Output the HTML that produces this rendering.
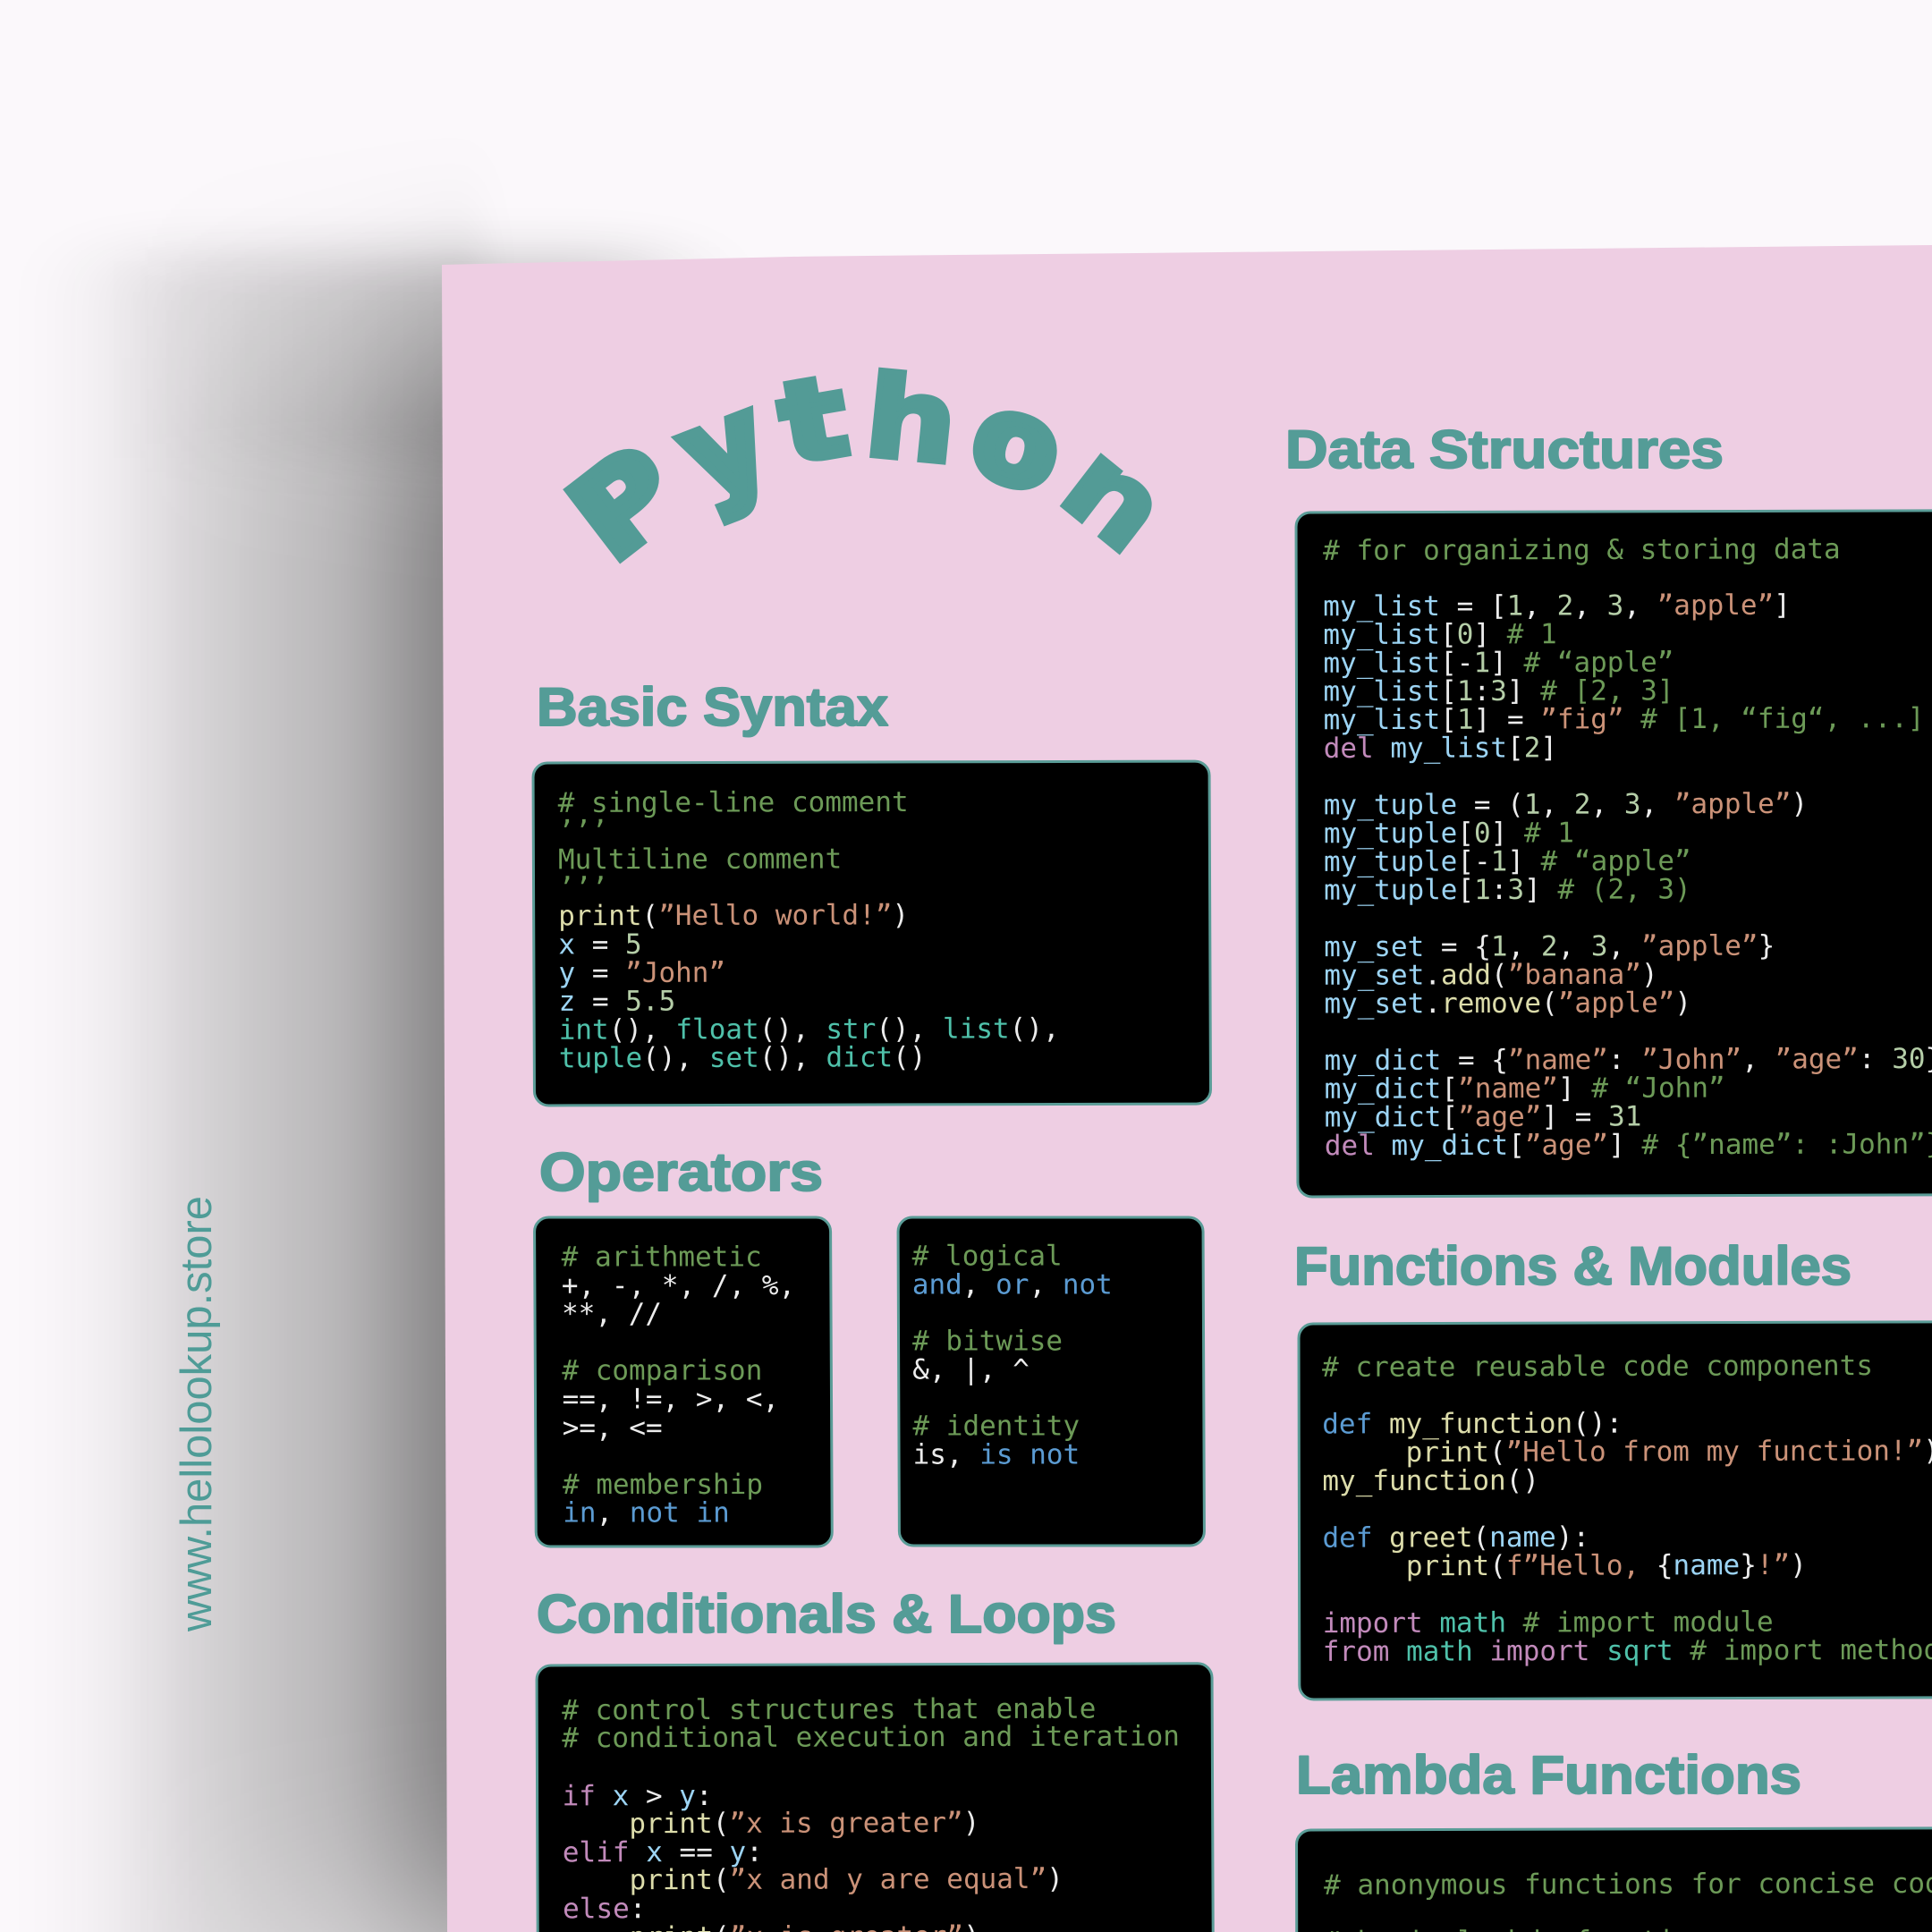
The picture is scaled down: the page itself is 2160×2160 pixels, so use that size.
<!DOCTYPE html>
<html lang="en"><head><meta charset="utf-8"><title>Python cheat sheet poster</title>
<style>
html,body{margin:0;padding:0;background:#fbf8fb;width:2160px;height:2160px;overflow:hidden}
svg{display:block}
text{white-space:pre}
.code text{font-family:"DejaVu Sans Mono","Liberation Mono",monospace;fill:#ececec;font-size:31px}
.h{font-family:"Liberation Sans",sans-serif;font-weight:700;font-size:60px;fill:#549c97;stroke:#549c97;stroke-width:2px;stroke-linejoin:round}
.py{font-family:"DejaVu Sans",sans-serif;font-weight:700;font-size:100px;fill:#539b96;stroke:#539b96;stroke-width:5px;stroke-linejoin:miter}
.box{fill:#000;stroke:#5a9c97;stroke-width:3px}
.c{fill:#6c9a57}.s{fill:#cb9278}.f{fill:#dcdcaa}.v{fill:#9cd4f4}.k{fill:#c28abb}.b{fill:#5b9bd2}.t{fill:#4fc1aa}.n{fill:#b5cea8}
</style></head><body>
<svg width="2160" height="2160" viewBox="0 0 2160 2160" xmlns="http://www.w3.org/2000/svg">
<defs>
<filter id="sa" x="-40%" y="-20%" width="180%" height="140%"><feGaussianBlur stdDeviation="62 28"/></filter>
<filter id="sb" x="-50%" y="-40%" width="200%" height="180%"><feGaussianBlur stdDeviation="20 110"/></filter>
<filter id="sc" x="-40%" y="-60%" width="180%" height="220%"><feGaussianBlur stdDeviation="50 24"/></filter>
<linearGradient id="gb" x1="0" x2="1" y1="0" y2="0"><stop offset="0" stop-color="#000" stop-opacity="0"/><stop offset=".6" stop-color="#000" stop-opacity=".19"/><stop offset="1" stop-color="#000" stop-opacity=".46"/></linearGradient>
<linearGradient id="gc" x1="0" x2="1" y1="0" y2="0"><stop offset="0" stop-color="#141418" stop-opacity="0"/><stop offset=".6" stop-color="#141418" stop-opacity=".1"/><stop offset="1" stop-color="#141418" stop-opacity=".1"/></linearGradient>
</defs>
<rect width="2160" height="2160" fill="#fbf8fb"/>
<rect x="125" y="280" width="620" height="2120" fill="#141418" opacity=".1" filter="url(#sa)"/>
<rect x="150" y="400" width="390" height="1770" fill="url(#gb)" filter="url(#sb)"/>
<rect x="160" y="292" width="570" height="220" fill="url(#gc)" filter="url(#sc)"/>
<polygon points="494,296 900,286.7 2160,274 2160,2160 500,2160" fill="#eecee3"/>

<text transform="translate(236 1824) rotate(-90)" textLength="487" lengthAdjust="spacingAndGlyphs" font-family="'Liberation Sans',sans-serif" font-size="49" fill="#4f9c97">www.hellolookup.store</text>

<text class="py" style="stroke-width:8px" transform="matrix(1.15,-.89,.79,1.03,684,631)">P</text>
<text class="py" style="stroke-width:8px" transform="matrix(1.246,-.48,.55,1.25,788,559.4)">y</text>
<text class="py" style="stroke-width:8px" transform="matrix(1.45,-.25,.21,1.2,882,517)">t</text>
<text class="py" transform="matrix(1.42,.13,-.127,1.25,964,508)">h</text>
<text class="py" style="stroke-width:9px" transform="matrix(1.3,.4,-.35,1.25,1080.5,524)">o</text>
<text class="py" transform="matrix(1.12,.91,-.77,1,1180,558)">n</text>

<text class="h" x="600" y="811" textLength="393" lengthAdjust="spacingAndGlyphs">Basic Syntax</text>
<text class="h" x="603" y="1331" textLength="317" lengthAdjust="spacingAndGlyphs">Operators</text>
<text class="h" x="600" y="1825" textLength="648" lengthAdjust="spacingAndGlyphs">Conditionals &amp; Loops</text>
<text class="h" x="1437" y="523" textLength="490" lengthAdjust="spacingAndGlyphs">Data Structures</text>
<text class="h" x="1447" y="1436" textLength="623" lengthAdjust="spacingAndGlyphs">Functions &amp; Modules</text>
<text class="h" x="1449" y="2005" textLength="565" lengthAdjust="spacingAndGlyphs">Lambda Functions</text>

<!-- Basic syntax -->
<g class="code" transform="translate(596 853) matrix(1 -.0026 .004 1 0 0)">
<rect class="box" width="756" height="383" rx="16"/>
<text x="27.5" y="55" style="fill:#6c9a57"># single-line comment</text>
<text x="27.5" y="86.6" style="fill:#6c9a57">’’’</text>
<text x="27.5" y="118.4" style="fill:#6c9a57">Multiline comment</text>
<text x="27.5" y="150" style="fill:#6c9a57">’’’</text>
<text x="27.5" y="181.4"><tspan class="f">print</tspan>(<tspan class="s">”Hello world!”</tspan>)</text>
<text x="27.5" y="213.4"><tspan class="v">x</tspan> = <tspan class="n">5</tspan></text>
<text x="27.5" y="245.2"><tspan class="v">y</tspan> = <tspan class="s">”John”</tspan></text>
<text x="27.5" y="277"><tspan class="v">z</tspan> = <tspan class="n">5.5</tspan></text>
<text x="27.5" y="308.8"><tspan class="t">int</tspan>(), <tspan class="t">float</tspan>(), <tspan class="t">str</tspan>(), <tspan class="t">list</tspan>(),</text>
<text x="27.5" y="340.4"><tspan class="t">tuple</tspan>(), <tspan class="t">set</tspan>(), <tspan class="t">dict</tspan>()</text>
</g>

<!-- Operators A -->
<g class="code" transform="translate(597.5 1361) matrix(1 0 .005 1 0 0)">
<rect class="box" width="331" height="368" rx="16"/>
<text x="30" y="54.5" style="fill:#6c9a57"># arithmetic</text>
<text x="30" y="86.3">+, -, *, /, %,</text>
<text x="30" y="118.1">**, //</text>
<text x="30" y="181.7" style="fill:#6c9a57"># comparison</text>
<text x="30" y="213.5">==, !=, &gt;, &lt;,</text>
<text x="30" y="245.3">&gt;=, &lt;=</text>
<text x="30" y="308.9" style="fill:#6c9a57"># membership</text>
<text x="30" y="340.7"><tspan class="b">in</tspan>, <tspan class="b">not in</tspan></text>
</g>

<!-- Operators B -->
<g class="code" transform="translate(1004 1361) matrix(1 0 .004 1 0 0)">
<rect class="box" width="341" height="367" rx="16"/>
<text x="15.5" y="53.5" style="fill:#6c9a57"># logical</text>
<text x="15.5" y="85.5"><tspan class="b">and</tspan>, <tspan class="b">or</tspan>, <tspan class="b">not</tspan></text>
<text x="15.5" y="148.5" style="fill:#6c9a57"># bitwise</text>
<text x="15.5" y="180.5">&amp;, |, ^</text>
<text x="15.5" y="243.5" style="fill:#6c9a57"># identity</text>
<text x="15.5" y="275.5">is, <tspan class="b">is not</tspan></text>
</g>

<!-- Conditionals -->
<g class="code" transform="translate(600 1862) matrix(1 -.003 .004 1 0 0)">
<rect class="box" width="755" height="420" rx="16"/>
<text x="28" y="60.5" style="fill:#6c9a57"># control structures that enable</text>
<text x="28" y="91.5" style="fill:#6c9a57"># conditional execution and iteration</text>
<text x="28" y="156.5"><tspan class="k">if</tspan> <tspan class="v">x</tspan> &gt; <tspan class="v">y</tspan>:</text>
<text x="28" y="187.5">    <tspan class="f">print</tspan>(<tspan class="s">”x is greater”</tspan>)</text>
<text x="28" y="219.5"><tspan class="k">elif</tspan> <tspan class="v">x</tspan> == <tspan class="v">y</tspan>:</text>
<text x="28" y="250.5">    <tspan class="f">print</tspan>(<tspan class="s">”x and y are equal”</tspan>)</text>
<text x="28" y="282.5"><tspan class="k">else</tspan>:</text>
<text x="28" y="314.5">    <tspan class="f">print</tspan>(<tspan class="s">”x is greater”</tspan>)</text>
</g>

<!-- Data structures -->
<g class="code" transform="translate(1449 573) matrix(1 -.003 .0026 1 0 0)">
<rect class="box" width="800" height="765" rx="16"/>
<text x="30" y="53" style="fill:#6c9a57"># for organizing &amp; storing data</text>
<text x="30" y="115.4"><tspan class="v">my_list</tspan> = [<tspan class="n">1</tspan>, <tspan class="n">2</tspan>, <tspan class="n">3</tspan>, <tspan class="s">”apple”</tspan>]</text>
<text x="30" y="147.1"><tspan class="v">my_list</tspan>[<tspan class="n">0</tspan>] <tspan class="c"># 1</tspan></text>
<text x="30" y="178.9"><tspan class="v">my_list</tspan>[-<tspan class="n">1</tspan>] <tspan class="c"># “apple”</tspan></text>
<text x="30" y="210.6"><tspan class="v">my_list</tspan>[<tspan class="n">1</tspan>:<tspan class="n">3</tspan>] <tspan class="c"># [2, 3]</tspan></text>
<text x="30" y="242.3"><tspan class="v">my_list</tspan>[<tspan class="n">1</tspan>] = <tspan class="s">”fig”</tspan> <tspan class="c"># [1, “fig“, ...]</tspan></text>
<text x="30" y="274.1"><tspan class="k">del</tspan> <tspan class="v">my_list</tspan>[<tspan class="n">2</tspan>]</text>
<text x="30" y="337.5"><tspan class="v">my_tuple</tspan> = (<tspan class="n">1</tspan>, <tspan class="n">2</tspan>, <tspan class="n">3</tspan>, <tspan class="s">”apple”</tspan>)</text>
<text x="30" y="369.3"><tspan class="v">my_tuple</tspan>[<tspan class="n">0</tspan>] <tspan class="c"># 1</tspan></text>
<text x="30" y="401"><tspan class="v">my_tuple</tspan>[-<tspan class="n">1</tspan>] <tspan class="c"># “apple”</tspan></text>
<text x="30" y="432.7"><tspan class="v">my_tuple</tspan>[<tspan class="n">1</tspan>:<tspan class="n">3</tspan>] <tspan class="c"># (2, 3)</tspan></text>
<text x="30" y="496.2"><tspan class="v">my_set</tspan> = {<tspan class="n">1</tspan>, <tspan class="n">2</tspan>, <tspan class="n">3</tspan>, <tspan class="s">”apple”</tspan>}</text>
<text x="30" y="527.9"><tspan class="v">my_set</tspan>.<tspan class="f">add</tspan>(<tspan class="s">”banana”</tspan>)</text>
<text x="30" y="559.6"><tspan class="v">my_set</tspan>.<tspan class="f">remove</tspan>(<tspan class="s">”apple”</tspan>)</text>
<text x="30" y="623.1"><tspan class="v">my_dict</tspan> = {<tspan class="s">”name”</tspan>: <tspan class="s">”John”</tspan>, <tspan class="s">”age”</tspan>: <tspan class="n">30</tspan>}</text>
<text x="30" y="654.9"><tspan class="v">my_dict</tspan>[<tspan class="s">”name”</tspan>] <tspan class="c"># “John”</tspan></text>
<text x="30" y="686.6"><tspan class="v">my_dict</tspan>[<tspan class="s">”age”</tspan>] = <tspan class="n">31</tspan></text>
<text x="30" y="718.4"><tspan class="k">del</tspan> <tspan class="v">my_dict</tspan>[<tspan class="s">”age”</tspan>] <tspan class="c"># {”name”: :John”}</tspan></text>
</g>

<!-- Functions -->
<g class="code" transform="translate(1452 1480) matrix(1 -.003 .002 1 0 0)">
<rect class="box" width="800" height="420" rx="16"/>
<text x="26" y="59" style="fill:#6c9a57"># create reusable code components</text>
<text x="26" y="122.6"><tspan class="b">def</tspan> <tspan class="f">my_function</tspan>():</text>
<text x="26" y="154.4">     <tspan class="f">print</tspan>(<tspan class="s">”Hello from my function!”</tspan>)</text>
<text x="26" y="186.2"><tspan class="f">my_function</tspan>()</text>
<text x="26" y="249.8"><tspan class="b">def</tspan> <tspan class="f">greet</tspan>(<tspan class="v">name</tspan>):</text>
<text x="26" y="281.6">     <tspan class="f">print</tspan>(<tspan class="s">f”Hello, </tspan>{<tspan class="v">name</tspan>}<tspan class="s">!”</tspan>)</text>
<text x="26" y="345.2"><tspan class="k">import</tspan> <tspan class="t">math</tspan> <tspan class="c"># import module</tspan></text>
<text x="26" y="377"><tspan class="k">from</tspan> <tspan class="t">math</tspan> <tspan class="k">import</tspan> <tspan class="t">sqrt</tspan> <tspan class="c"># import method</tspan></text>
</g>

<!-- Lambda -->
<g class="code" transform="translate(1449.5 2046) matrix(1 -.003 .002 1 0 0)">
<rect class="box" width="800" height="300" rx="16"/>
<text x="30.5" y="72" style="fill:#6c9a57"># anonymous functions for concise code</text>
<text x="30.5" y="135.5" style="fill:#6c9a57"># basic lambda function</text>
</g>
</svg>
</body></html>
